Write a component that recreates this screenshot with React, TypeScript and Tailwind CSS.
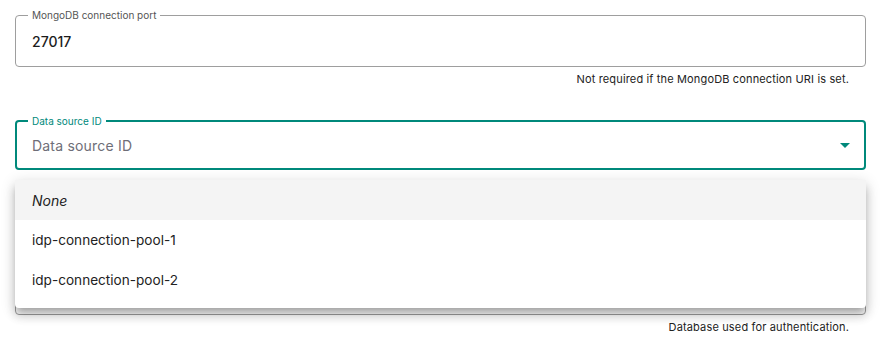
const FONT = "font-['Inter','Noto_Sans',sans-serif]"

const OPTIONS = ['idp-connection-pool-1', 'idp-connection-pool-2']

function Helper({ text }: { text: string }) {
  return (
    <p className="mt-[5px] pr-[22px] text-right text-[11px] leading-[14px] tracking-[0.15px] text-[#222]">{text}</p>
  )
}

export default function App() {
  return (
    <div className={`relative flex h-[342px] w-[886px] flex-col overflow-hidden bg-white px-[15px] pt-[15px] ${FONT}`}>
      {/* Port field */}
      <div className="relative h-[52px] w-[851px] rounded-[4px] border border-[#9e9e9e]">
        <span className="absolute -top-[7px] left-[12px] bg-white px-[4px] text-[10px] leading-[12px] text-[#555]">
          MongoDB connection port
        </span>
        <div className="flex h-full items-center pl-[16px] text-[14px] font-medium text-[#1c1c1c]">27017</div>
      </div>
      <Helper text="Not required if the MongoDB connection URI is set." />

      {/* Data source select */}
      <div className="relative mt-[34px] h-[50px] w-[851px] rounded-[4px] border-2 border-[#00897b]">
        <span className="absolute -top-[7px] left-[11px] bg-white px-[4px] text-[10px] leading-[12px] text-[#00897b]">
          Data source ID
        </span>
        <div className="flex h-full items-center justify-between pl-[15px] pr-[14px]">
          <span className="text-[14px] tracking-[0.2px] text-[#6e6e78]">Data source ID</span>
          <svg width="10" height="5" viewBox="0 0 10 5">
            <path d="M0 0h10L5 5z" fill="#00897b" />
          </svg>
        </div>
      </div>

      {/* Database field (under the menu) */}
      <div className="mt-[95px] h-[50px] w-[851px] rounded-[4px] border border-[#9e9e9e]" />
      <Helper text="Database used for authentication." />

      {/* Open menu */}
      <div className="absolute left-[15px] top-[180px] w-[851px] rounded-[4px] bg-white pb-[8px] shadow-[0_5px_6px_-3px_rgba(0,0,0,0.2),0_8px_10px_1px_rgba(0,0,0,0.14),0_3px_14px_2px_rgba(0,0,0,0.12)]">
        <div className="flex h-[40px] items-center bg-[#f4f4f4] pl-[17px] text-[14px] italic text-[#222]">None</div>
        {OPTIONS.map((o) => (
          <div key={o} className="flex h-[40px] items-center pl-[17px] text-[13.6px] text-[#222]">
            {o}
          </div>
        ))}
      </div>
    </div>
  )
}
